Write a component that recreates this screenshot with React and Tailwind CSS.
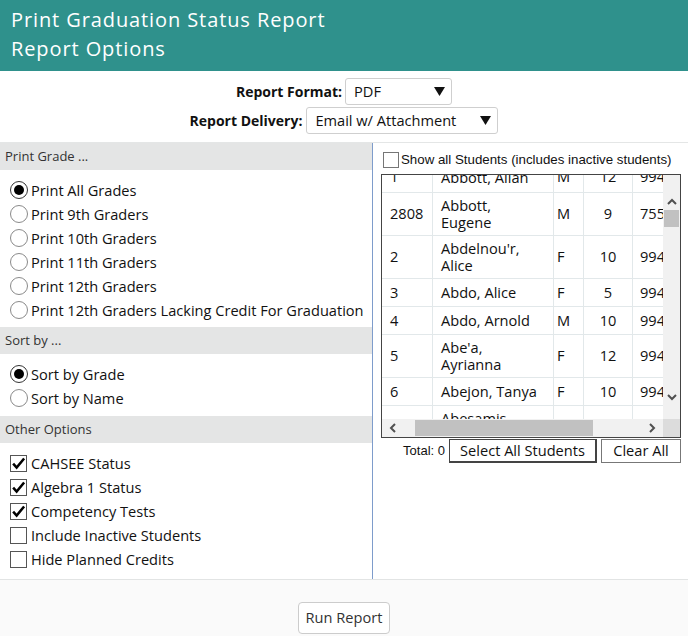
import React from 'react';

const Radio = ({ checked, label }) => (
  <div className="flex items-center h-[24px]">
    <span
      className={
        'ml-[10px] w-[18px] h-[18px] rounded-full border bg-white flex items-center justify-center shrink-0 ' +
        (checked ? 'border-[#333] border-[1.5px]' : 'border-[#8a8a8a]')
      }
    >
      {checked && <span className="w-[10px] h-[10px] rounded-full bg-black" />}
    </span>
    <span className="ml-[3px] mt-[2px] text-[14.6px] text-[#111] whitespace-nowrap">{label}</span>
  </div>
);

const Check = ({ checked, label }) => (
  <div className="flex items-center h-[24px]">
    <span className="ml-[10px] w-[17px] h-[17px] border border-[#555] bg-white flex items-center justify-center shrink-0">
      {checked && (
        <svg viewBox="0 0 16 16" className="w-[15px] h-[15px]">
          <path d="M2.3 8.2 L6 12.3 L14 2.6" fill="none" stroke="#000" strokeWidth="2.7" strokeLinejoin="miter" />
        </svg>
      )}
    </span>
    <span className="ml-[4px] mt-[2px] text-[14.6px] text-[#111] whitespace-nowrap">{label}</span>
  </div>
);

const SectionHead = ({ children }) => (
  <div className="h-[27px] bg-[#e4e5e5] text-[13px] text-[#333] leading-[27px] pl-[5px]">{children}</div>
);

const Arrow = () => (
  <svg viewBox="0 0 10 8" className="w-[11px] h-[9px]">
    <path d="M0 0 L10 0 L5 8 Z" fill="#111" />
  </svg>
);

const rows = [
  { h: 'h-[31px]', id: '1', name: ['Abbott, Allan'], g: 'M', gr: '12', n: '99400' },
  { h: 'h-[43px]', id: '2808', name: ['Abbott,', 'Eugene'], g: 'M', gr: '9', n: '75500' },
  { h: 'h-[43px]', id: '2', name: ["Abdelnou'r,", 'Alice'], g: 'F', gr: '10', n: '99400' },
  { h: 'h-[28px]', id: '3', name: ['Abdo, Alice'], g: 'F', gr: '5', n: '99400' },
  { h: 'h-[28px]', id: '4', name: ['Abdo, Arnold'], g: 'M', gr: '10', n: '99400' },
  { h: 'h-[43px]', id: '5', name: ["Abe'a,", 'Ayrianna'], g: 'F', gr: '12', n: '99400' },
  { h: 'h-[28px]', id: '6', name: ['Abejon, Tanya'], g: 'F', gr: '10', n: '99400' },
  { h: 'h-[43px]', id: '7', name: ['Abesamis,', 'Daniel'], g: 'M', gr: '11', n: '99400' },
];

const Chevron = ({ dir }) => {
  const d = {
    up: 'M1 6 L5 2 L9 6',
    down: 'M1 2 L5 6 L9 2',
    left: 'M6 1 L2 5 L6 9',
    right: 'M2 1 L6 5 L2 9',
  }[dir];
  const vb = dir === 'up' || dir === 'down' ? '0 0 10 8' : '0 0 8 10';
  const cls = dir === 'up' || dir === 'down' ? 'w-[10px] h-[8px]' : 'w-[8px] h-[10px]';
  return (
    <svg viewBox={vb} className={cls}>
      <path d={d} fill="none" stroke="#505050" strokeWidth="2" />
    </svg>
  );
};

export default function App() {
  return (
    <div className="w-[688px] h-[636px] bg-white flex flex-col overflow-hidden [font-family:'Open_Sans',Lato,sans-serif] text-[#111]">
      {/* Header */}
      <div className="h-[71px] bg-[#2f918c] text-white text-[20px] leading-[29px] tracking-[0.9px] pl-[11px] pt-[5px] shrink-0">
        <div>Print Graduation Status Report</div>
        <div>Report Options</div>
      </div>

      {/* Format options */}
      <div className="h-[71px] flex flex-col items-center pt-[7px] gap-[2px] shrink-0">
        <div className="flex items-center">
          <span className="font-bold text-[14px] mr-[3px]">Report Format:</span>
          <div className="w-[107px] h-[27px] border border-[#cfcfcf] rounded-[3px] bg-white flex items-center justify-between pl-[8px] pr-[6px] text-[14.6px]">
            <span>PDF</span>
            <Arrow />
          </div>
        </div>
        <div className="flex items-center">
          <span className="font-bold text-[14px] mr-[4px]">Report Delivery:</span>
          <div className="w-[192px] h-[27px] border border-[#cfcfcf] rounded-[3px] bg-white flex items-center justify-between pl-[8px] pr-[6px] text-[14.6px]">
            <span>Email w/ Attachment</span>
            <Arrow />
          </div>
        </div>
      </div>

      {/* Main */}
      <div className="flex border-t border-[#e4e6e6] h-[437px] shrink-0">
        {/* Left */}
        <div className="w-[373px] border-r border-[#7e9ccb] flex flex-col shrink-0">
          <SectionHead>Print Grade ...</SectionHead>
          <div className="pt-[8px] pb-[5px]">
            <Radio checked label="Print All Grades" />
            <Radio label="Print 9th Graders" />
            <Radio label="Print 10th Graders" />
            <Radio label="Print 11th Graders" />
            <Radio label="Print 12th Graders" />
            <Radio label="Print 12th Graders Lacking Credit For Graduation" />
          </div>
          <SectionHead>Sort by ...</SectionHead>
          <div className="pt-[8px] pb-[6px]">
            <Radio checked label="Sort by Grade" />
            <Radio label="Sort by Name" />
          </div>
          <SectionHead>Other Options</SectionHead>
          <div className="pt-[8px]">
            <Check checked label="CAHSEE Status" />
            <Check checked label="Algebra 1 Status" />
            <Check checked label="Competency Tests" />
            <Check label="Include Inactive Students" />
            <Check label="Hide Planned Credits" />
          </div>
        </div>

        {/* Right */}
        <div className="flex-1 pl-[8px] pr-[7px] pt-[8px] flex flex-col">
          <div className="flex items-center h-[17px] ml-[2px] [font-family:'Liberation_Sans',Arial,sans-serif] text-[13.3px] text-[#111]">
            <span className="w-[16px] h-[16px] border border-[#767676] bg-white mr-[2px] shrink-0" />
            <span className="whitespace-nowrap">Show all Students (includes inactive students)</span>
          </div>
          <div className="mt-[6px] w-[300px] border border-[#444] flex flex-col bg-white">
            <div className="flex h-[244px]">
              <div className="w-[281px] overflow-hidden">
                <div className="-mt-[13px] w-[331px] text-[14.6px] text-[#111]">
                  {rows.map((r, i) => (
                    <div key={i} className={'flex border-b border-[#e2e8ea] ' + r.h}>
                      <div className="w-[51px] border-r border-[#e2e8ea] pl-[8px] flex items-center shrink-0">{r.id}</div>
                      <div className="w-[121px] border-r border-[#e2e8ea] pl-[8px] flex flex-col justify-center leading-[17px] shrink-0 whitespace-nowrap">
                        {r.name.map((l, j) => (
                          <div key={j}>{l}</div>
                        ))}
                      </div>
                      <div className="w-[30px] border-r border-[#e2e8ea] pl-[3px] flex items-center shrink-0">{r.g}</div>
                      <div className="w-[49px] border-r border-[#e2e8ea] flex items-center justify-center shrink-0">{r.gr}</div>
                      <div className="w-[80px] pl-[7px] flex items-center shrink-0">{r.n}</div>
                    </div>
                  ))}
                </div>
              </div>
              <div className="w-[17px] bg-[#f1f1f1] flex flex-col items-center shrink-0">
                <div className="mt-[22px] h-[10px] flex items-center"><Chevron dir="up" /></div>
                <div className="mt-[3px] w-[15px] h-[17px] bg-[#c1c1c1]" />
                <div className="mt-auto mb-[17px] h-[10px] flex items-center"><Chevron dir="down" /></div>
              </div>
            </div>
            <div className="flex h-[18px]">
              <div className="w-[281px] bg-[#f1f1f1] flex items-center">
                <div className="w-[33px] pl-[7px] flex"><Chevron dir="left" /></div>
                <div className="w-[178px] h-[16px] bg-[#c1c1c1]" />
                <div className="flex-1 flex justify-end pr-[7px]"><Chevron dir="right" /></div>
              </div>
              <div className="w-[17px] bg-[#dcdcdc]" />
            </div>
          </div>
          <div className="flex items-center justify-end mt-[1px] w-[300px]">
            <span className="[font-family:'Liberation_Sans',Arial,sans-serif] text-[13px] mr-[4px]">Total: 0</span>
            <button className="w-[148px] h-[24px] border border-[#444] border-r-2 border-b-2 bg-white text-[14.6px] text-[#111] flex items-center justify-center whitespace-nowrap">
              Select All Students
            </button>
            <button className="ml-[4px] w-[80px] h-[24px] border border-[#777] bg-white text-[14.6px] text-[#111] flex items-center justify-center">
              Clear All
            </button>
          </div>
        </div>
      </div>

      {/* Footer */}
      <div className="flex-1 bg-[#fafafa] border-t border-[#e2e4e4] flex justify-center pt-[22px]">
        <button className="w-[92px] h-[32px] border border-[#cccccc] rounded-[4px] bg-white text-[14.6px] text-[#333]">
          Run Report
        </button>
      </div>
    </div>
  );
}
